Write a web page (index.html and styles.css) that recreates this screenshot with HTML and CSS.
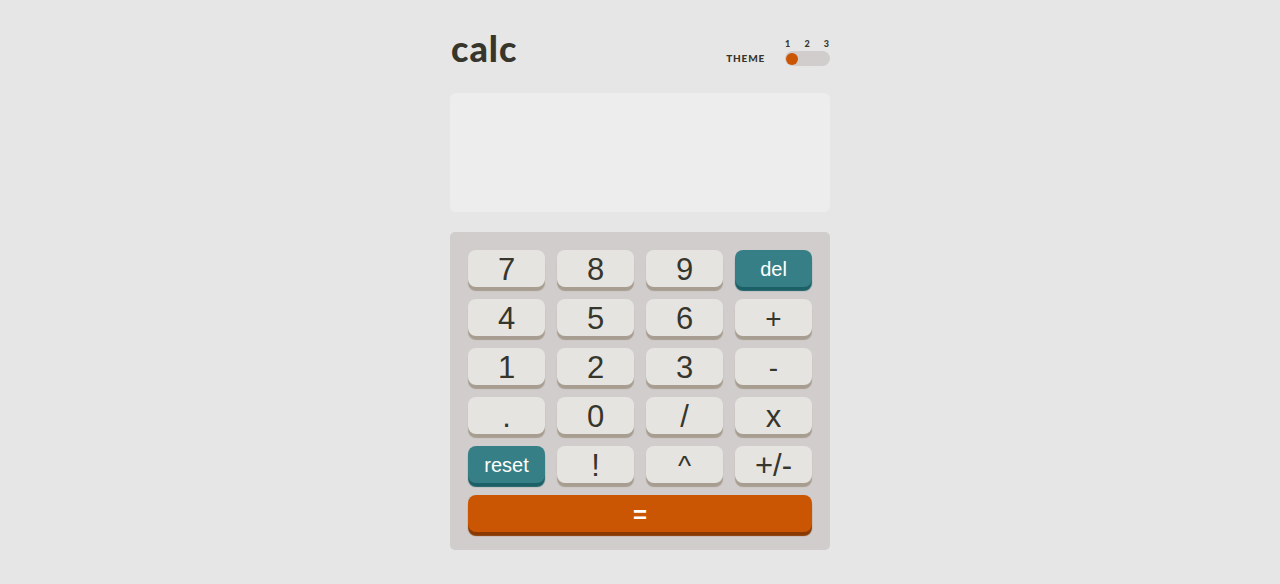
FILE: index.html
```html
<!DOCTYPE html>
<html lang="en">
<head>
<meta charset="utf-8">
<title>calc</title>
<link rel="stylesheet" href="styles.css">
</head>
<body>
<main class="calc">
  <header class="calc-header">
    <h1 class="logo">calc</h1>
    <div class="theme">
      <span class="theme-label">THEME</span>
      <div class="switch">
        <div class="switch-nums"><span>1</span><span>2</span><span>3</span></div>
        <div class="switch-track"><span class="switch-knob"></span></div>
      </div>
    </div>
  </header>

  <section class="screen"></section>

  <section class="keypad">
    <button class="key">7</button>
    <button class="key">8</button>
    <button class="key">9</button>
    <button class="key key-blue key-word">del</button>
    <button class="key">4</button>
    <button class="key">5</button>
    <button class="key">6</button>
    <button class="key key-op">+</button>
    <button class="key">1</button>
    <button class="key">2</button>
    <button class="key">3</button>
    <button class="key key-op">-</button>
    <button class="key">.</button>
    <button class="key">0</button>
    <button class="key">/</button>
    <button class="key">x</button>
    <button class="key key-blue key-word">reset</button>
    <button class="key">!</button>
    <button class="key key-op">^</button>
    <button class="key">+/-</button>
    <button class="key key-equals">=</button>
  </section>
</main>
</body>
</html>
```

FILE: styles.css
```css
* {
  box-sizing: border-box;
}

body {
  margin: 0;
  background: #e6e6e6;
  font-family: "Liberation Sans", Arial, sans-serif;
  color: #36362c;
}

.calc {
  width: 380px;
  margin: 0 auto;
  padding-top: 30px;
}

/* header: logo + theme switch */
.calc-header {
  display: flex;
  justify-content: space-between;
  align-items: flex-end;
  height: 36px;
}

.logo {
  margin: 0;
  font-family: "Lato", sans-serif;
  font-weight: 900;
  font-size: 36px;
  line-height: 36px;
  letter-spacing: 1px;
  color: #36362c;
  padding-left: 1px;
}

.theme {
  display: flex;
  align-items: flex-end;
  gap: 20px;
}

.theme-label {
  font-family: "Lato", sans-serif;
  font-weight: 900;
  font-size: 10px;
  letter-spacing: 0.8px;
  line-height: 10px;
  margin-bottom: 3px;
}

.switch {
  width: 45px;
}

.switch-nums {
  display: flex;
  justify-content: space-between;
  padding: 0 1px 0 0;
  font-family: "Lato", sans-serif;
  font-weight: 900;
  font-size: 9px;
  line-height: 9px;
  margin-bottom: 3px;
}

.switch-track {
  height: 15px;
  border-radius: 8px;
  background: #d2cdcd;
  display: flex;
  align-items: center;
  padding: 0 1px;
}

.switch-knob {
  width: 12px;
  height: 12px;
  border-radius: 50%;
  background: #ca5502;
}

/* display */
.screen {
  margin-top: 27px;
  height: 119px;
  border-radius: 6px;
  background: #ededed;
}

/* keys */
.keypad {
  margin-top: 20px;
  padding: 18px;
  border-radius: 5px;
  background: #d2cdcd;
  display: grid;
  grid-template-columns: repeat(4, 1fr);
  grid-auto-rows: 37px;
  gap: 12px;
}

.key {
  border: 0;
  padding: 2px 0 0;
  border-radius: 8px;
  background: #e5e4e1;
  box-shadow: 0 4px 1px #a79e91;
  color: #36362c;
  font-family: "Liberation Sans", Arial, sans-serif;
  font-size: 31px;
  line-height: 35px;
}

.key-op {
  font-size: 28px;
}

.key-blue {
  background: #377f86;
  box-shadow: 0 4px 1px #1b6066;
  color: #fff;
}

.key-word {
  font-size: 20px;
}

.key-equals {
  grid-column: 1 / -1;
  background: #ca5502;
  box-shadow: 0 4px 1px #893901;
  color: #fff;
  font-weight: 700;
  font-size: 24px;
}
```
